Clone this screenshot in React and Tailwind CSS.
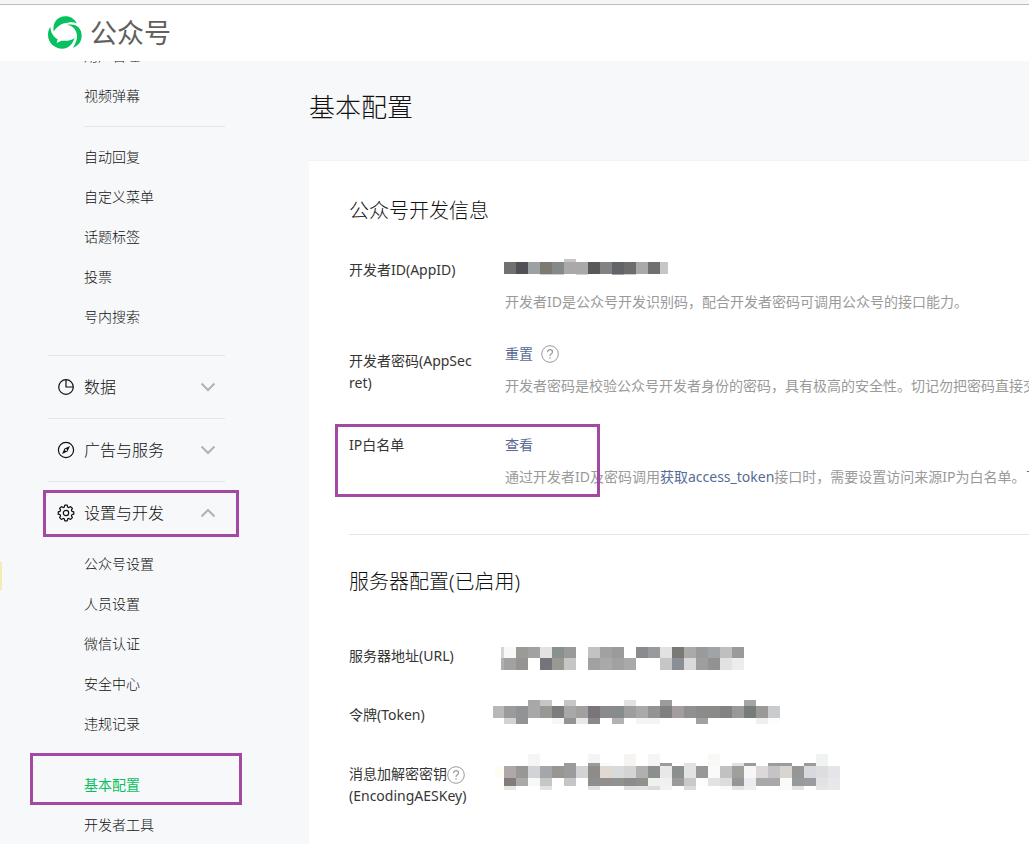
import clsx from 'clsx';

const FONT = "font-['Noto_Sans','Noto_Sans_CJK_SC',sans-serif]";

const repeat = (color, n) => Array(n).fill(color);

// each band is a row of 12px blocks: y, height and the colours from left to right
const MASKED = {
    appId: {
        width: 164,
        height: 16,
        first: 12,
        bands: [
            { y: 0, h: 3, cells: [...repeat(null, 5), '#c6c6c6'] },
            { y: 3, h: 12, cells: ['#737072', '#4f5156', '#9ca2a3', '#7d7a73', '#838a89', '#a9a9a9', '#a9a9a9', '#585858', '#808284', '#63646a', '#6e6d6b', '#a9a9a9', '#707070', '#c6c6c6'] },
            { y: 15, h: 1, cells: [...repeat(null, 3), '#d0d0d0', '#d0d0d0', null, '#d0d0d0', null, null, '#a5a0a8', '#d0d0d0'] },
        ],
    },
    url: {
        width: 243,
        height: 23,
        first: 3,
        bands: [
            { y: 0, h: 11, cells: ['#d5d5d5', '#f8f8f8', '#9a9b96', '#a1a19f', '#e2e2e2', '#889190', '#9a9a9a', null, '#c3c2c0', '#a1a1a1', '#9b9b9b', null, '#8a8b8e', '#999a9e', '#e2e2e2', '#7a7973', '#aaaaaa', '#9a9a9a', '#a1a4a7', '#bfbfbf', '#9a9a9a'] },
            { y: 11, h: 12, cells: ['#afafaf', '#a1a19f', '#989393', null, '#74757a', '#999891', '#c6c6c6', null, '#a0a2a1', '#a9a9a9', '#a1a1a1', '#a9a9a9', null, null, '#c6c6c6', '#898f94', '#dadada', '#9e9e9e', '#929292', '#e2e2e2', '#ededed'] },
        ],
    },
    token: {
        width: 287,
        height: 24,
        first: 11,
        bands: [
            { y: 0, h: 6, cells: [null, null, null, '#a5a7a8', '#c6c6c6', null, '#c6c6c6', ...repeat(null, 4), '#e2e2e2', null, null, '#9c9c9c', ...repeat(null, 6), '#a5a5a5'] },
            { y: 6, h: 12, cells: ['#b9b8b7', '#9b9b9b', '#929394', '#a8a8a8', '#989994', '#7c7c7c', '#a8a8a8', '#a1a09e', '#7b7478', '#8b8b8f', '#868c8e', '#9e9e9e', '#aaa9a7', '#939393', '#808080', '#a39d9f', '#909090', '#8a8b8b', '#8b8b89', '#828282', '#999999', '#777b79', '#9a9997', '#c9cbcf'] },
            { y: 18, h: 6, cells: [null, '#d2d2d2', '#929396', null, null, '#f6f6f6', '#929396', '#e8e8e8', '#89898d', null, '#b3b1b1', null, '#f4f4f2', '#f4f4f2', null, null, null, '#a1a1a1', ...repeat(null, 4), '#efefef', '#fdfdfd'] },
        ],
    },
    aesKey: {
        width: 345,
        height: 36,
        first: 9,
        bands: [
            { y: 0, h: 9, cells: [...repeat(null, 3), '#f5f5f5', ...repeat(null, 4), '#f4f4f4', null, null, '#f6f4f3', null, '#f5f5f5', ...repeat(null, 4), '#f8f8f6', ...repeat(null, 8), '#f1f3f2'] },
            { y: 9, h: 3, cells: [null, null, '#fdfdfd', '#f5f5f5', null, null, '#9b9b9d', null, '#9b9b9b', '#fafafa', null, '#f6f4f3', null, '#f5f5f5', '#9c9c9c', null, '#e2e2e2', null, '#f8f8f6', null, '#e2e2e2', '#9b9b9b', null, '#9b9b9b', '#9b9b9b', null, '#9b9b9b', '#f1f3f2'] },
            { y: 12, h: 12, cells: ['#fffdf3', '#aea9a8', '#979795', '#d2d3d6', '#a5a6aa', '#999590', '#9b9b9d', '#d3d3d3', '#8f8b87', '#dfd9d1', '#d9dadb', '#d4d4d4', '#b0b0b0', '#8b8f8e', '#e8e8e9', '#8b8f8e', '#e2e4e4', '#989996', '#fafafa', '#c1c1c1', '#a09f9d', '#f6f6f6', '#dcd8d8', '#c5c3c6', '#d8d4d0', '#969696', '#d6dae0', '#dddde0', '#e3e5e8'] },
            { y: 24, h: 8, cells: [null, '#837d7a', '#a9a9ab', '#f8f8f8', '#c6c6c6', null, '#c6c6c6', null, '#8f8f8f', '#91908e', '#929291', '#8c8c8c', '#91918c', '#f0f0f0', '#f0f0f0', '#9a9a9a', '#c9c9c9', '#fdfdfd', '#e2e2e2', '#dfdddc', '#969696', '#ebecef', '#a9a9a9', '#a9a9ab', '#fafafa', '#98999c', '#9b9c9f', '#e2e2e2', '#e8e8e8'] },
            { y: 32, h: 4, cells: [null, '#e9e5e1', null, null, '#e2e2e2', null, null, null, '#e2e2e2', null, null, '#e0e0e0', '#e2e2e2', '#dcdcdc', '#f2f2f2', null, '#dadada', null, null, '#fafafa', '#e4e4e4', '#eeeff2', null, null, '#fafafa', '#e2e2e2', null, '#e6e6e6', '#e8e8e8'] },
        ],
    },
};

function Mosaic({ name, className }) {
    const { width, height, first, bands } = MASKED[name];

    return (
        <svg className={clsx('block max-w-none', className)} width={width} height={height} shapeRendering="crispEdges" aria-hidden="true">
            {bands.map(({ y, h, cells }) =>
                cells.map((color, i) => color && (
                    <rect
                        key={`${y}-${i}`}
                        x={i === 0 ? 0 : first + (i - 1) * 12}
                        y={y}
                        width={i === 0 ? first : 12}
                        height={h}
                        fill={color}
                    />
                ))
            )}
        </svg>
    );
}

function Logo() {
    return (
        <svg width="34" height="34" viewBox="0 0 102 102" fill="#07c160" aria-hidden="true">
            <path d="M17 47C13 20 28 1 52 1c16 0 28 8 34 21-9-4-17-4-26-2C40 21 27 31 17 47Z" />
            <path d="M57 27c26-6 44 8 44 32 0 17-10 30-26 36 10-15 15-31 10-46C81 37 72 29 57 27Z" />
            <path d="M7 33c1 15 8 29 22 37l-3 11 14-7c15 1 27 1 40-8C73 86 61 98 43 98 19 98 0 80 0 57c0-9 2-17 7-24Z" />
        </svg>
    );
}

function PieIcon() {
    return (
        <svg width="18" height="18" viewBox="0 0 18 18" fill="none" stroke="currentColor" strokeWidth="1.2" aria-hidden="true">
            <path d="M9 1.700a7.300 7.300 0 1 0 7.300 7.300" />
            <path d="M9 1.700a7.300 7.300 0 0 1 7.300 7.300H9Z" />
        </svg>
    );
}

function CompassIcon() {
    return (
        <svg width="18" height="18" viewBox="0 0 18 18" fill="none" stroke="currentColor" strokeWidth="1.2" aria-hidden="true">
            <circle cx="9" cy="9" r="7.6" />
            <path d="M13 5 10.500 10.500 7.500 7.500Z" fill="currentColor" stroke="none" />
            <path d="M5 13 7.500 7.500 10.500 10.500Z" fill="currentColor" stroke="none" />
            <circle cx="9" cy="9" r="1" fill="#f7f8fa" stroke="none" />
        </svg>
    );
}

function GearIcon() {
    return (
        <svg width="18" height="18" viewBox="0 0 18 18" fill="none" stroke="currentColor" strokeWidth="1.2" strokeLinejoin="round" aria-hidden="true">
            <path d="M7.8 1.2h2.4l.5 1.9 1.2.5 1.7-1 1.8 1.8-1 1.7.5 1.2 1.9.5v2.4l-1.9.5-.5 1.2 1 1.7-1.8 1.8-1.7-1-1.2.5-.5 1.9H7.8l-.5-1.9-1.2-.5-1.7 1-1.8-1.8 1-1.7-.5-1.2-1.9-.5V7.8l1.9-.5.5-1.2-1-1.7 1.8-1.8 1.7 1 1.2-.5Z" />
            <circle cx="9" cy="9" r="2.7" />
        </svg>
    );
}

function Chevron({ up }) {
    return (
        <svg className={clsx(up && 'rotate-180')} width="16" height="10" viewBox="0 0 16 10" fill="none" stroke="#b2b2b2" strokeWidth="2" aria-hidden="true">
            <path d="M1.5 1.5 8 8l6.5-6.5" />
        </svg>
    );
}

function HelpButton({ className }) {
    return (
        <button type="button" aria-label="帮助" className={clsx('align-middle text-[#9a9a9a]', className)}>
            <svg width="18" height="18" viewBox="0 0 18 18" fill="none" stroke="currentColor" aria-hidden="true">
                <circle cx="9" cy="9" r="8.3" />
                <path d="M6.5 7.2c0-1.6 1-2.5 2.5-2.5s2.5.9 2.5 2.2c0 1.9-2.5 1.9-2.5 4" strokeWidth="1.2" />
                <path d="M9 12.2v1.4" strokeWidth="1.3" />
            </svg>
        </button>
    );
}

function Highlight({ className }) {
    return <div className={clsx('pointer-events-none absolute border-3 border-[#a349a4]', className)} />;
}

function NavItem({ children, active, highlighted }) {
    return (
        <li className="relative pl-9">
            <a href="#" aria-current={active ? 'page' : undefined} className={clsx('block text-sm leading-10', active && 'font-normal text-[#07c160]')}>
                {children}
            </a>
            {highlighted && <Highlight className="-top-3 -right-[17px] -left-[18px] h-[52px]" />}
        </li>
    );
}

function NavGroup({ icon, title, open, highlighted }) {
    return (
        <div className="relative border-t border-[#e4e5e7]">
            <button type="button" aria-expanded={!!open} className="flex h-[62px] w-full items-center px-[9px]">
                {icon}
                <span className="ml-[9px] text-base">{title}</span>
                <span className="ml-auto"><Chevron up={open} /></span>
            </button>
            {highlighted && <Highlight className="top-2 -right-[14px] -left-[5px] h-[47px]" />}
        </div>
    );
}

function Sidebar() {
    return (
        <aside className="w-[309px] shrink-0 overflow-hidden pl-12 font-light text-[#111]">
            <nav className="-mt-[25px] w-[177px]">
                <ul>
                    <NavItem>用户管理</NavItem>
                    <NavItem>视频弹幕</NavItem>
                </ul>
                <hr className="my-[10px] ml-9 border-[#e4e5e7]" />
                <ul className="mb-[18px]">
                    <NavItem>自动回复</NavItem>
                    <NavItem>自定义菜单</NavItem>
                    <NavItem>话题标签</NavItem>
                    <NavItem>投票</NavItem>
                    <NavItem>号内搜索</NavItem>
                </ul>
                <NavGroup icon={<PieIcon />} title="数据" />
                <NavGroup icon={<CompassIcon />} title="广告与服务" />
                <NavGroup icon={<GearIcon />} title="设置与开发" open highlighted />
                <ul>
                    <NavItem>公众号设置</NavItem>
                    <NavItem>人员设置</NavItem>
                    <NavItem>微信认证</NavItem>
                    <NavItem>安全中心</NavItem>
                    <NavItem>违规记录</NavItem>
                </ul>
                <ul className="mt-[21px]">
                    <NavItem active highlighted>基本配置</NavItem>
                    <NavItem>开发者工具</NavItem>
                </ul>
            </nav>
        </aside>
    );
}

function Row({ label, children, className, labelClassName }) {
    return (
        <div className={clsx('relative flex', className)}>
            <dt className={clsx('w-[156px] shrink-0 pr-7', labelClassName)}>{label}</dt>
            <dd className="min-w-0 flex-1">{children}</dd>
        </div>
    );
}

function Hint({ children }) {
    return <p className="mt-[10px] whitespace-nowrap text-[#9a9a9a]">{children}</p>;
}

export default function App() {
    return (
        <div className={clsx('relative flex h-screen flex-col overflow-hidden bg-[#f7f8fa] text-[#353535]', FONT)}>
            <div className="h-[5px] shrink-0 border-b border-[#bdbdbd] bg-[#f5f5f5]" />
            <header className="z-10 flex h-14 shrink-0 items-center bg-white pl-12">
                <Logo />
                <span className="ml-2 text-[27px] leading-9 text-[#606060]">公众号</span>
            </header>

            <div className="flex min-h-0 flex-1">
                <Sidebar />
                <main className="min-w-0 flex-1 overflow-hidden">
                    <h1 className="mt-7 mb-[35px] text-[26px] leading-9 font-light text-[#111]">基本配置</h1>
                    <div className="h-full border-t border-[#f1f2f4] bg-white pt-9 pl-10 text-sm leading-[22px]">
                        <section>
                            <h2 className="mb-[34px] text-xl leading-7 font-light text-[#111]">公众号开发信息</h2>
                            <dl>
                                <Row label="开发者ID(AppID)">
                                    <div className="h-[22px]"><Mosaic name="appId" className="-ml-px" /></div>
                                    <Hint>开发者ID是公众号开发识别码，配合开发者密码可调用公众号的接口能力。</Hint>
                                </Row>
                                <Row label="开发者密码(AppSecret)" className="mt-[30px]" labelClassName="pt-[7px] break-all">
                                    <div className="flex h-[22px] items-center">
                                        <a href="#" className="text-[#576b95]">重置</a>
                                        <HelpButton className="ml-2" />
                                    </div>
                                    <Hint>开发者密码是校验公众号开发者身份的密码，具有极高的安全性。切记勿把密码直接交给第三方开发者</Hint>
                                </Row>
                                <Row label="IP白名单" className="mt-[37px]">
                                    <a href="#" className="block w-fit text-[#576b95]">查看</a>
                                    <Hint>
                                        通过开发者ID及密码调用<a href="#" className="text-[#576b95]">获取access_token</a>接口时，需要设置访问来源IP为白名单。<a href="#" className="text-[#576b95]">了解更多</a>
                                    </Hint>
                                    <Highlight className="-top-[10px] -left-[14px] h-[73px] w-[265px]" />
                                </Row>
                            </dl>
                        </section>

                        <hr className="mt-[46px] mb-[33px] border-[#e4e5e7]" />

                        <section>
                            <h2 className="mb-[49px] text-xl leading-7 font-light text-[#111]">服务器配置(已启用)</h2>
                            <dl>
                                <Row label="服务器地址(URL)">
                                    <Mosaic name="url" className="mt-[2px] -mb-[3px] -ml-1" />
                                </Row>
                                <Row label="令牌(Token)" className="mt-[37px]">
                                    <Mosaic name="token" className="-mt-1 -ml-3" />
                                </Row>
                                <Row
                                    label={<>消息加解密密钥<HelpButton /><br />(EncodingAESKey)</>}
                                    className="mt-[37px]"
                                    labelClassName="whitespace-nowrap"
                                >
                                    <Mosaic name="aesKey" className="-mt-[9px] -ml-[10px]" />
                                </Row>
                            </dl>
                        </section>
                    </div>
                </main>
            </div>

            <div className="absolute top-[562px] left-0 h-7 w-[2px] bg-[#f1edb0]" />
        </div>
    );
}
